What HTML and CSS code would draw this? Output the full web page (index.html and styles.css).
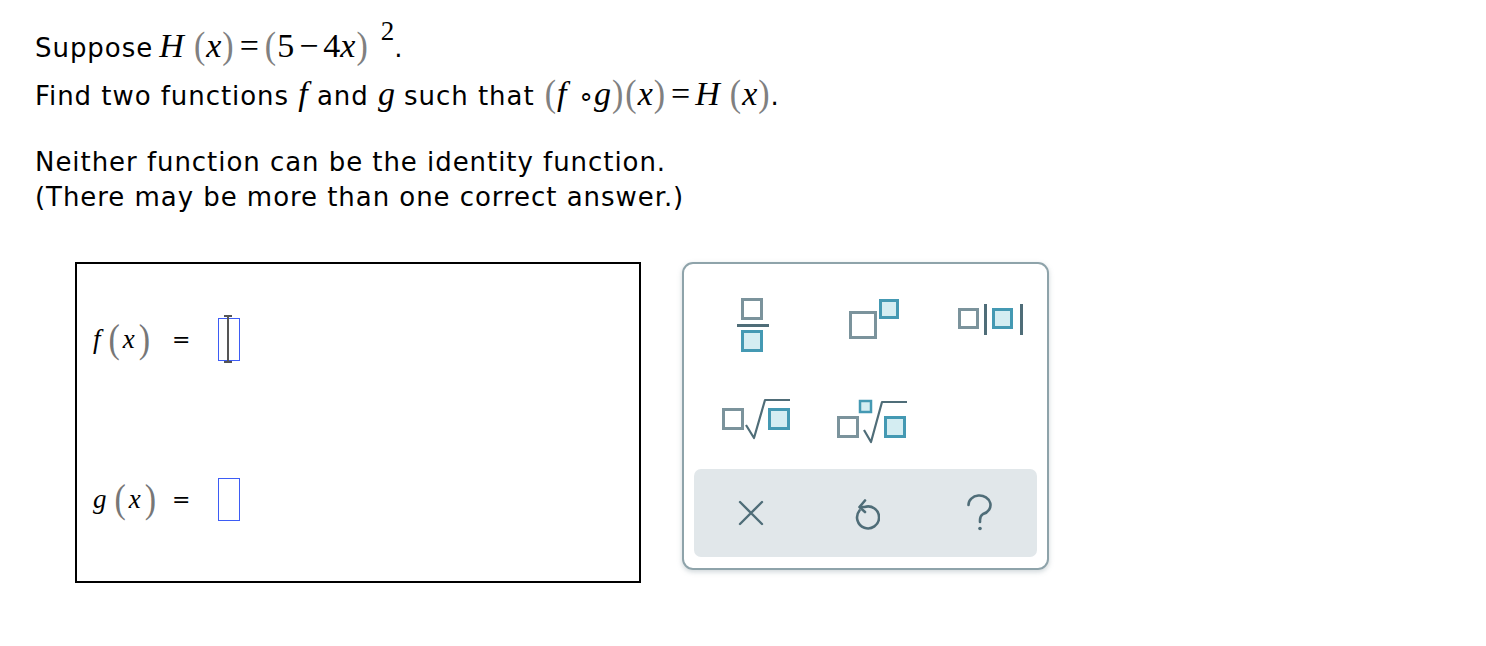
FILE: index.html
```html
<!DOCTYPE html>
<html>
<head>
<meta charset="utf-8">
<link rel="stylesheet" href="styles.css">
</head>
<body>
<div class="page">
  <div class="stem">
    <p class="line l1">Suppose <span class="m"><i class="H">H</i><span class="pp">(</span><i>x</i><span class="pp">)</span><span class="rel">=</span><span class="pp">(</span>5<span class="op">−</span>4<i>x</i><span class="pp">)</span><sup>2</sup></span>.</p>
    <p class="line l2">Find two functions <span class="m"><i>f</i></span> and <span class="m"><i>g</i></span> such that <span class="m"><span class="pp">(</span><i>f</i> <span class="comp">∘</span><i>g</i><span class="pp">)</span><span class="pp">(</span><i>x</i><span class="pp">)</span><span class="rel">=</span><i class="H2">H</i><span class="pp">(</span><i>x</i><span class="pp">)</span></span>.</p>
    <p class="line l3">Neither function can be the identity function.</p>
    <p class="line l4">(There may be more than one correct answer.)</p>
  </div>

  <div class="work">
    <div class="answer">
      <div class="row r1">
        <span class="lab"><i>f</i><span class="lp">(</span><i>x</i><span class="lp">)</span></span>
        <span class="eq">=</span>
        <span class="box focus"><span class="caret"></span></span>
      </div>
      <div class="row r2">
        <span class="lab"><i>g</i><span class="lp">(</span><i>x</i><span class="lp">)</span></span>
        <span class="eq">=</span>
        <span class="box"></span>
      </div>
    </div>

    <div class="palette">
      <div class="grid">
        <div class="key">
          <svg width="40" height="60" viewBox="0 0 40 60">
            <rect x="9.5" y="7.5" width="19" height="19" fill="#fff" stroke="#7b939c" stroke-width="3"/>
            <rect x="4" y="32" width="32" height="3" fill="#4f6d78"/>
            <rect x="9.5" y="39.5" width="19" height="19" fill="#d4edf2" stroke="#4499b3" stroke-width="3"/>
          </svg>
        </div>
        <div class="key">
          <svg width="60" height="50" viewBox="0 0 60 50">
            <rect x="10.5" y="17.5" width="25" height="25" fill="#fff" stroke="#7b939c" stroke-width="3"/>
            <rect x="40.5" y="5.5" width="17" height="17" fill="#d4edf2" stroke="#4499b3" stroke-width="3"/>
          </svg>
        </div>
        <div class="key">
          <svg width="80" height="40" viewBox="0 0 80 40">
            <rect x="12.5" y="8.5" width="18" height="18" fill="#fff" stroke="#7b939c" stroke-width="3"/>
            <rect x="37" y="3" width="3" height="31" fill="#4f6d78"/>
            <rect x="46.5" y="8.5" width="18" height="18" fill="#d4edf2" stroke="#4499b3" stroke-width="3"/>
            <rect x="73" y="3" width="3" height="31" fill="#4f6d78"/>
          </svg>
        </div>
        <div class="key">
          <svg width="80" height="50" viewBox="0 0 80 50">
            <rect x="10.5" y="15.5" width="19" height="19" fill="#fff" stroke="#7b939c" stroke-width="3"/>
            <path d="M33 31 L41 44 L52 6 L77 6" fill="none" stroke="#4f6d78" stroke-width="2.2" stroke-linejoin="round"/>
            <rect x="56.5" y="15.5" width="19" height="19" fill="#d4edf2" stroke="#4499b3" stroke-width="3"/>
          </svg>
        </div>
        <div class="key">
          <svg width="80" height="50" viewBox="0 0 80 50">
            <rect x="8.5" y="21.5" width="19" height="19" fill="#fff" stroke="#7b939c" stroke-width="3"/>
            <rect x="30" y="5" width="11" height="11" fill="#d4edf2" stroke="#4499b3" stroke-width="2.5"/>
            <path d="M34 34 L41 46 L52 6 L77 6" fill="none" stroke="#4f6d78" stroke-width="2.2" stroke-linejoin="round"/>
            <rect x="55.5" y="21.5" width="19" height="19" fill="#d4edf2" stroke="#4499b3" stroke-width="3"/>
          </svg>
        </div>
        <div class="key"></div>
      </div>
      <div class="tools">
        <div class="tool">
          <svg width="30" height="30" viewBox="0 0 30 30">
            <path d="M4 4 L26 26 M26 4 L4 26" stroke="#4f6d78" stroke-width="2.4" stroke-linecap="round"/>
          </svg>
        </div>
        <div class="tool">
          <svg width="30" height="36" viewBox="0 0 30 36">
            <path d="M9.5 15.5 A11 11 0 1 0 14.5 12 L10 12" fill="none" stroke="#4f6d78" stroke-width="2.6" stroke-linecap="round"/>
            <path d="M15 5.5 L9.5 12 L15 17" fill="none" stroke="#4f6d78" stroke-width="2.6" stroke-linecap="round" stroke-linejoin="round"/>
          </svg>
        </div>
        <div class="tool">
          <svg width="30" height="38" viewBox="0 0 30 38">
            <path d="M3.5 11 A11 9.5 0 1 1 18 20 Q15 22 15 26 L15 28" fill="none" stroke="#4f6d78" stroke-width="2.6" stroke-linecap="round"/>
            <circle cx="15" cy="34.5" r="1.8" fill="#4f6d78"/>
          </svg>
        </div>
      </div>
    </div>
  </div>
</div>
</body>
</html>
```

FILE: styles.css
```css
* { box-sizing: border-box; }
html, body { margin: 0; padding: 0; background: #fff; }
body { font-family: "DejaVu Sans", Verdana, sans-serif; color: #000; }
.page { padding: 22px 0 0 35px; }
.line { margin: 0; font-size: 26px; letter-spacing: 0.95px; white-space: nowrap; }
.l1 { height: 48px; line-height: 48px; }
.l2 { height: 48px; line-height: 48px; }
.l3 { margin-top: 27px; height: 35px; line-height: 35px; }
.l4 { height: 35px; line-height: 35px; }
.m { font-family: "Liberation Serif", "Times New Roman", serif; font-size: 34px; letter-spacing: 0; }
.m i { font-style: italic; }
.H { margin-left: -3px; margin-right: 9px; }
.H2 { margin-right: 9px; }
.pp { color: #808080; display: inline-block; transform: scaleY(1.1); margin: 0 1px; font-weight: 300; }
.rel { margin: 0 5px; }
.op { margin: 0 5px; }
.comp { font-size: 26px; margin-left: 3px; }
sup { font-size: 27px; vertical-align: 17px; line-height: 0; margin-left: 12px; }

.work { display: flex; align-items: flex-start; margin-top: 47px; margin-left: 40px; gap: 41px; }
.answer { width: 566px; height: 321px; border: 2px solid #000; display: flex; flex-direction: column; padding: 53px 0 0 16px; }
.row { display: flex; align-items: center; height: 44px; }
.r2 { margin-top: 116px; }
.lab { font-family: "Liberation Serif", "Times New Roman", serif; font-size: 27px; width: 78px; display: flex; align-items: center; }
.lab i { font-style: italic; }
.lp { color: #777; display: inline-block; font-size: 34px; transform: scaleY(1.15); margin: 0 3px 0 8px; }
.lp + i + .lp { margin: 0 0 0 4px; }
.eq { font-family: "DejaVu Sans", sans-serif; font-size: 22px; width: 47px; padding-left: 1px; }
.box { width: 22px; height: 43px; border: 1.5px solid #3d5cf5; position: relative; display: inline-block; }
.caret { position: absolute; left: 8px; top: -4px; width: 2px; height: 48px; background: #555; }
.caret::before, .caret::after { content: ""; position: absolute; left: -3px; width: 8px; height: 2px; background: #555; }
.caret::before { top: 0; }
.caret::after { bottom: 0; }

.palette { width: 367px; height: 308px; border: 2px solid #8ea3aa; border-radius: 11px; box-shadow: 0 2px 5px rgba(120,140,150,0.35); padding: 0 10px 10px 10px; display: flex; flex-direction: column; }
.grid { display: grid; grid-template-columns: 117px 117px 117px; grid-template-rows: 104px 101px; }
.key { display: flex; align-items: center; justify-content: center; }
.grid .key:nth-child(1) { padding-top: 12px; }
.grid .key:nth-child(2) { padding-top: 8px; }
.grid .key:nth-child(3) { padding-top: 10px; }
.grid .key:nth-child(4) { padding-top: 0; }
.grid .key:nth-child(5) { padding-top: 4px; }
.tools { background: #e1e7ea; border-radius: 7px; height: 88px; display: flex; align-items: center; }
.tool { flex: 1; display: flex; justify-content: center; align-items: center; }
```
